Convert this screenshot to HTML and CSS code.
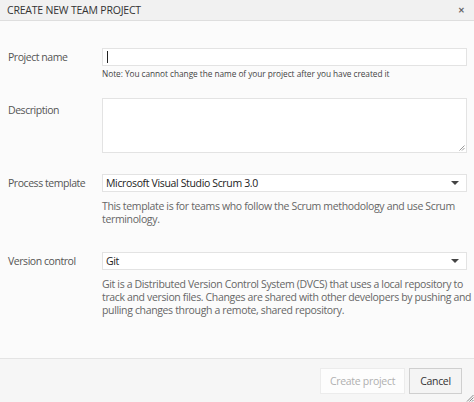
FILE: index.html
```html
<!DOCTYPE html>
<html>
<head>
<meta charset="utf-8">
<link rel="stylesheet" href="styles.css">
</head>
<body>
<div class="dialog">
  <div class="header">
    <span class="title">CREATE NEW TEAM PROJECT</span>
    <span class="close">&#x2715;</span>
  </div>
  <div class="body">
    <div class="row row-name">
      <div class="label">Project name</div>
      <div class="field">
        <div class="input"><span class="caret"></span></div>
        <div class="note">Note: You cannot change the name of your project after you have created it</div>
      </div>
    </div>
    <div class="row row-desc">
      <div class="label label-top">Description</div>
      <div class="field">
        <div class="textarea">
          <svg class="grip" width="7" height="7" viewBox="0 0 7 7"><path d="M6.5 1.5 L1.5 6.5 M6.5 4 L4 6.5" stroke="#999" stroke-width="1" fill="none"/></svg>
        </div>
      </div>
    </div>
    <div class="row row-template">
      <div class="label">Process template</div>
      <div class="field">
        <div class="select"><span>Microsoft Visual Studio Scrum 3.0</span><span class="arrow"></span></div>
        <div class="help">This template is for teams who follow the Scrum methodology and use Scrum<br>terminology.</div>
      </div>
    </div>
    <div class="row row-vc">
      <div class="label">Version control</div>
      <div class="field">
        <div class="select"><span>Git</span><span class="arrow"></span></div>
        <div class="help">Git is a Distributed Version Control System (DVCS) that uses a local repository to<br>track and version files. Changes are shared with other developers by pushing and<br>pulling changes through a remote, shared repository.</div>
      </div>
    </div>
  </div>
  <div class="footer">
    <button class="btn btn-disabled">Create project</button>
    <button class="btn btn-cancel">Cancel</button>
    <svg class="resize" width="9" height="9" viewBox="0 0 9 9"><path d="M8.5 2 L2 8.5 M8.5 4.5 L4.5 8.5 M8.5 7 L7 8.5" stroke="#888" stroke-width="1" fill="none"/></svg>
  </div>
</div>
</body>
</html>
```

FILE: styles.css
```css
html, body {
  margin: 0;
  padding: 0;
  background: #ffffff;
}
.dialog {
  width: 474px;
  height: 402px;
  display: flex;
  flex-direction: column;
  background: #fbfbfb;
  font-family: "Open Sans", "Noto Sans", sans-serif;
  color: #444;
  position: relative;
}
.header {
  height: 21px;
  box-sizing: border-box;
  background: #f1f1f1;
  border-bottom: 1px solid #dedede;
  display: flex;
  align-items: center;
  justify-content: space-between;
  padding: 0 9px 0 7px;
}
.title {
  font-size: 10.5px;
  color: #333;
  letter-spacing: -0.2px;
}
.close {
  font-size: 7.5px;
  color: #666;
  font-weight: bold;
}
.body {
  flex: 1;
  padding: 0 7px 0 8px;
}
.row {
  display: grid;
  grid-template-columns: 94px 365px;
}
.label {
  font-size: 10.5px;
  letter-spacing: -0.45px;
  color: #555;
  line-height: 18px;
  white-space: nowrap;
}
.row-name { margin-top: 27px; }
.row-desc { margin-top: 18px; }
.row-template { margin-top: 21px; }
.row-vc { margin-top: 26px; }
.label-top { padding-top: 3px; }
.input, .select, .textarea {
  box-sizing: border-box;
  background: #fff;
  border: 1px solid #e3e3e3;
}
.input {
  height: 18px;
  display: flex;
  align-items: center;
  padding-left: 4px;
}
.caret {
  width: 1px;
  height: 12px;
  background: #222;
}
.note {
  font-size: 8.3px;
  letter-spacing: -0.05px;
  line-height: 12px;
  margin-top: 2px;
  color: #444;
  white-space: nowrap;
}
.textarea {
  height: 55px;
  position: relative;
}
.grip {
  position: absolute;
  right: 1px;
  bottom: 1px;
}
.select {
  height: 18px;
  display: flex;
  align-items: center;
  justify-content: space-between;
  padding: 0 7px 0 3px;
  font-size: 10.5px;
  letter-spacing: -0.35px;
  color: #222;
}
.arrow {
  width: 0;
  height: 0;
  border-left: 4px solid transparent;
  border-right: 4px solid transparent;
  border-top: 4px solid #444;
}
.help {
  font-size: 10.5px;
  letter-spacing: -0.35px;
  line-height: 13px;
  color: #666;
  margin-top: 8px;
  white-space: nowrap;
}
.footer {
  height: 44px;
  box-sizing: border-box;
  border-top: 1px solid #e4e4e4;
  background: #f6f6f6;
  display: flex;
  justify-content: flex-end;
  align-items: flex-start;
  padding: 9px 12px 0 0;
  gap: 4px;
  position: relative;
}
.btn {
  height: 26px;
  box-sizing: border-box;
  font-family: "Open Sans", "Noto Sans", sans-serif;
  font-size: 10.5px;
  letter-spacing: -0.3px;
  padding: 0;
  cursor: default;
}
.btn-disabled {
  width: 85px;
  background: #fdfdfd;
  border: 1px solid #ececec;
  color: #b0b0b0;
}
.btn-cancel {
  width: 53px;
  background: #f4f4f4;
  border: 1px solid #cfcfcf;
  color: #333;
}
.resize {
  position: absolute;
  right: 0;
  bottom: 0;
}
```
